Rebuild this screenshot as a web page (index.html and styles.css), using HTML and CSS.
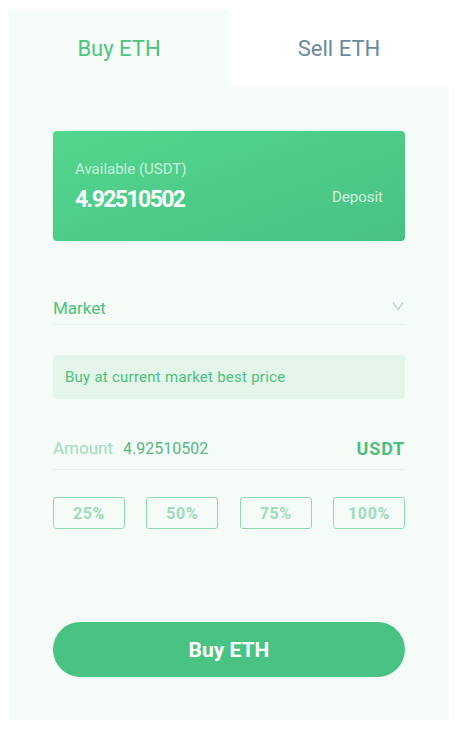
FILE: index.html
```html
<!DOCTYPE html>
<html lang="en">
<head>
    <meta charset="UTF-8">
    <meta name="viewport" content="width=device-width, initial-scale=1.0">
    <title>Buy ETH</title>
    <link rel="stylesheet" href="styles.css">
</head>
<body>
    <div class="trade">
        <div class="tabs">
            <div class="tab active">Buy ETH</div>
            <div class="tab">Sell ETH</div>
        </div>
        <div class="panel">
            <div class="balance">
                <div class="balance-info">
                    <div class="balance-label">Available (USDT)</div>
                    <div class="balance-value">4.92510502</div>
                </div>
                <a href="#" class="deposit">Deposit</a>
            </div>

            <div class="select">
                <span>Market</span>
                <svg class="chevron" width="12" height="10" viewBox="0 0 12 10">
                    <path d="M1 1.5 L6 8.5 L11 1.5" fill="none" stroke="#b3c7cb" stroke-width="1.2"/>
                </svg>
            </div>

            <div class="hint">Buy at current market best price</div>

            <div class="amount">
                <span class="amount-label">Amount</span>
                <span class="amount-value">4.92510502</span>
                <span class="amount-unit">USDT</span>
            </div>

            <div class="percents">
                <button>25%</button>
                <button>50%</button>
                <button>75%</button>
                <button>100%</button>
            </div>

            <button class="submit">Buy ETH</button>
        </div>
    </div>
</body>
</html>
```

FILE: styles.css
```css
body {
    font-family: Roboto, "Liberation Sans", sans-serif;
    margin: 0;
    padding: 10px 10px 0 9px;
    background-color: #ffffff;
}
.trade {
    width: 440px;
}
.tabs {
    display: flex;
}
.tab {
    flex: 1;
    height: 77px;
    line-height: 78px;
    text-align: center;
    font-size: 22px;
    color: #6b8a9c;
    background: #ffffff;
}
.tab.active {
    color: #4cc480;
    background: #f5fbf7;
}
.panel {
    background: #f5fbf7;
    padding: 44px 44px 43px;
    height: 633px;
    box-sizing: border-box;
}
.balance {
    height: 110px;
    border-radius: 4px;
    background: linear-gradient(160deg, #53d68e 0%, #47c283 100%);
    display: flex;
    align-items: flex-start;
    justify-content: space-between;
    padding: 29px 22px 0;
    box-sizing: border-box;
}
.balance-label {
    font-size: 15px;
    color: #c9f1da;
}
.balance-value {
    font-size: 23px;
    font-weight: bold;
    letter-spacing: -1.6px;
    color: #ffffff;
    margin-top: 8px;
}
.deposit {
    font-size: 15px;
    color: #d4f3e1;
    text-decoration: none;
    margin-top: 28px;
}
.select {
    margin-top: 43px;
    height: 41px;
    display: flex;
    align-items: center;
    justify-content: space-between;
    border-bottom: 1px solid #e2f3e9;
    font-size: 17px;
    color: #4cc27f;
    box-sizing: border-box;
    padding-top: 8px;
}
.chevron {
    margin-right: 1px;
    margin-top: -4px;
}
.hint {
    margin-top: 30px;
    height: 44px;
    line-height: 45px;
    background: #e4f5ea;
    border-radius: 4px;
    padding: 0 12px;
    font-size: 15px;
    letter-spacing: 0.25px;
    color: #4cc27f;
}
.amount {
    margin-top: 29px;
    height: 42px;
    display: flex;
    align-items: center;
    border-bottom: 1px solid #e8efeb;
    box-sizing: border-box;
    padding-bottom: 1px;
}
.amount-label {
    font-size: 17px;
    color: #a2dcbc;
    margin-right: 10px;
}
.amount-value {
    font-size: 16px;
    color: #55b886;
    flex: 1;
}
.amount-unit {
    font-size: 18px;
    font-weight: bold;
    letter-spacing: 0.8px;
    color: #4cbf80;
}
.percents {
    margin-top: 27px;
    display: flex;
    justify-content: space-between;
}
.percents button {
    width: 72px;
    height: 32px;
    border: 1px solid #8fdab1;
    border-radius: 3px;
    background: transparent;
    font-family: inherit;
    font-size: 16px;
    font-weight: bold;
    letter-spacing: 0.6px;
    color: #9ddcb9;
    padding: 0;
}
.submit {
    display: block;
    width: 100%;
    height: 55px;
    margin-top: 93px;
    border: none;
    border-radius: 28px;
    background: #48c383;
    color: #ffffff;
    font-family: inherit;
    font-size: 21px;
    font-weight: bold;
}
```
